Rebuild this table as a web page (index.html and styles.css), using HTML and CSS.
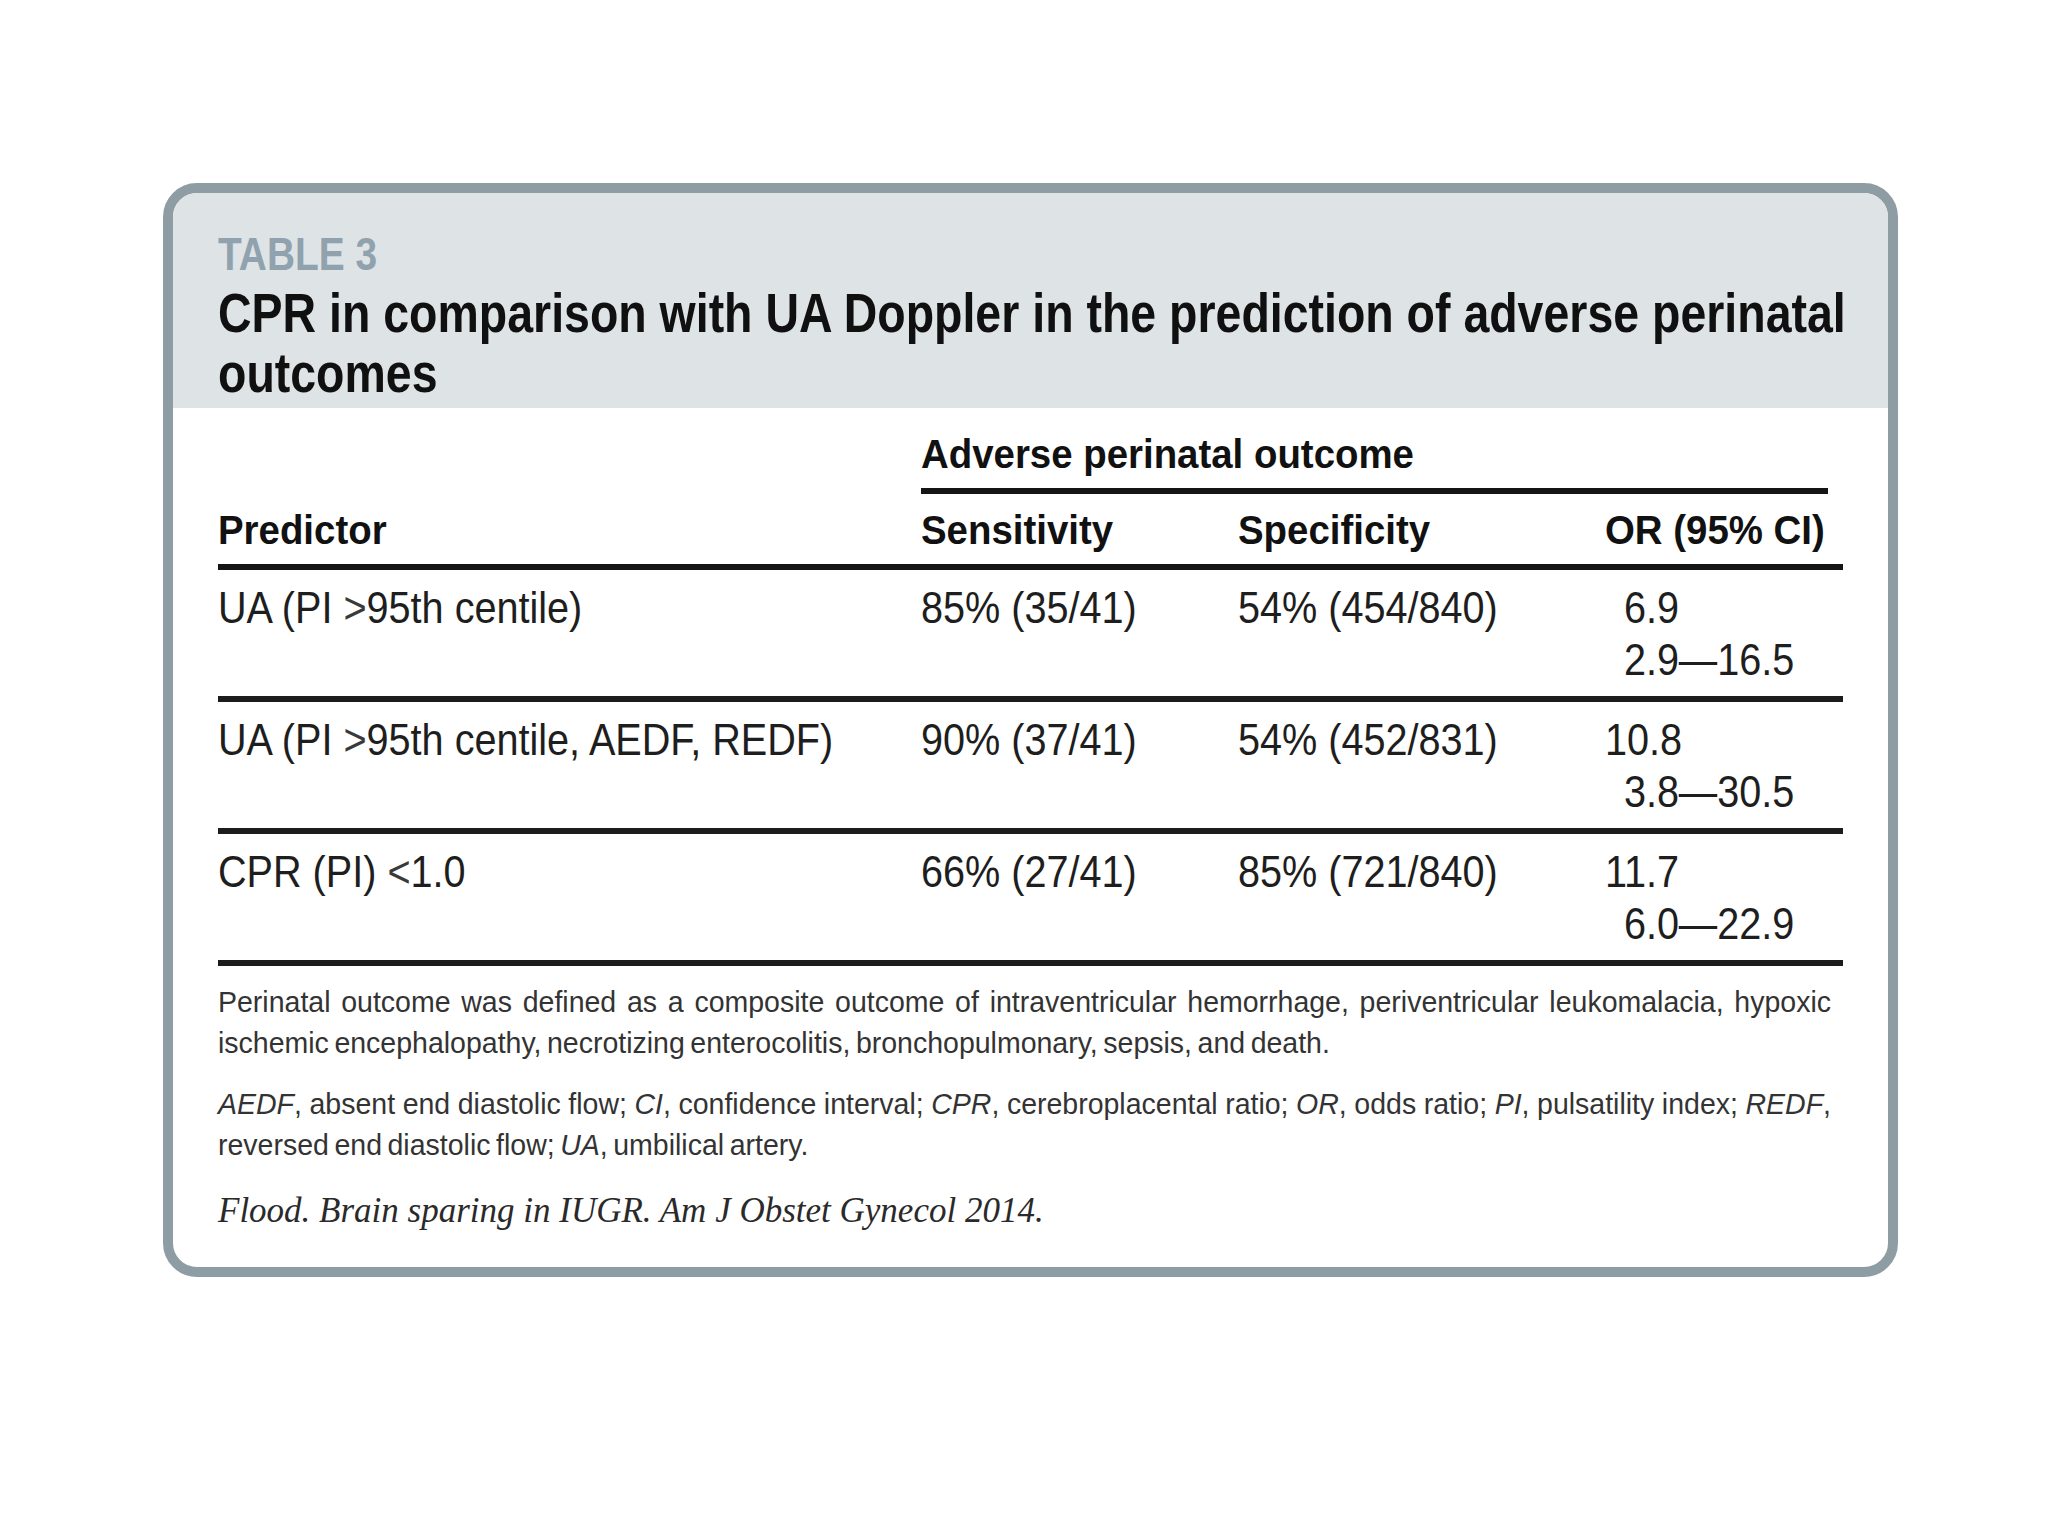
FILE: index.html
```html
<!DOCTYPE html>
<html lang="en">
<head>
<meta charset="utf-8">
<title>Table 3 – CPR vs UA Doppler</title>
<link rel="stylesheet" href="styles.css">
</head>
<body>
<div class="page">
  <section class="card">
    <header class="card-head">
      <div class="label">TABLE 3</div>
      <h1 class="title">CPR in comparison with UA Doppler in the prediction of adverse perinatal outcomes</h1>
    </header>
    <div class="card-body">
      <div class="row group-row">
        <div></div>
        <div class="group"><div class="cell">Adverse perinatal outcome</div></div>
      </div>
      <div class="row head-row">
        <div class="cell">Predictor</div>
        <div class="cell">Sensitivity</div>
        <div class="cell">Specificity</div>
        <div class="cell">OR (95% CI)</div>
      </div>
      <div class="row data-row">
        <div class="cell">UA (PI <span class="op">&gt;</span>95th centile)</div>
        <div class="cell">85% (35/41)</div>
        <div class="cell">54% (454/840)</div>
        <div><div class="cell pad">6.9</div><div class="cell pad">2.9<span class="dash">–</span>16.5</div></div>
      </div>
      <div class="row data-row">
        <div class="cell">UA (PI <span class="op">&gt;</span>95th centile, AEDF, REDF)</div>
        <div class="cell">90% (37/41)</div>
        <div class="cell">54% (452/831)</div>
        <div><div class="cell">10.8</div><div class="cell pad">3.8<span class="dash">–</span>30.5</div></div>
      </div>
      <div class="row data-row">
        <div class="cell">CPR (PI) <span class="op">&lt;</span>1.0</div>
        <div class="cell">66% (27/41)</div>
        <div class="cell">85% (721/840)</div>
        <div><div class="cell">11.7</div><div class="cell pad">6.0<span class="dash">–</span>22.9</div></div>
      </div>
      <p class="note first">Perinatal outcome was defined as a composite outcome of intraventricular hemorrhage, periventricular leukomalacia, hypoxic ischemic encephalopathy, necrotizing enterocolitis, bronchopulmonary, sepsis, and death.</p>
      <p class="note"><i>AEDF</i>, absent end diastolic flow; <i>CI</i>, confidence interval; <i>CPR</i>, cerebroplacental ratio; <i>OR</i>, odds ratio; <i>PI</i>, pulsatility index; <i>REDF</i>, reversed end diastolic flow; <i>UA</i>, umbilical artery.</p>
      <p class="cite">Flood. Brain sparing in IUGR. Am J Obstet Gynecol 2014.</p>
    </div>
  </section>
</div>
</body>
</html>
```

FILE: styles.css
```css
html, body {
  margin: 0;
  padding: 0;
  background: #ffffff;
}

.page {
  padding: 183px 0 0 163px;
}

.card {
  box-sizing: border-box;
  width: 1735px;
  border: 10px solid #8e9ca3;
  border-radius: 34px;
  overflow: hidden;
  background: #ffffff;
  font-family: "Liberation Sans", Arial, sans-serif;
  color: #1e1e1e;
}

/* the source typeface is a condensed grotesque: narrow the glyphs horizontally */
.label,
.title,
.cell,
.note {
  transform-origin: 0 0;
}

.card-head {
  background: #dee3e6;
  padding: 36px 20px 5px 45px;
}

.label {
  font-size: 46px;
  line-height: 50px;
  font-weight: 700;
  color: #8fa2ae;
  white-space: nowrap;
  transform: scaleX(0.845);
}

.title {
  margin: 4px 0 0;
  width: calc(100% / 0.845);
  font-size: 55px;
  line-height: 60px;
  font-weight: 700;
  color: #101010;
  transform: scaleX(0.845);
}

.card-body {
  padding: 21px 45px 36px 45px;
}

.row {
  display: grid;
  grid-template-columns: 703px 317px 367px 1fr;
}

.cell {
  white-space: nowrap;
}

.group-row,
.head-row {
  font-size: 40px;
  line-height: 50px;
  font-weight: 700;
  color: #111111;
}

.group-row .cell,
.head-row .cell {
  transform: scaleX(0.96);
}

.group {
  grid-column: 2 / 5;
  margin-right: 15px;
  padding-bottom: 9px;
  border-bottom: 6px solid #151515;
}

.head-row {
  margin-top: 11px;
  padding-bottom: 9px;
  border-bottom: 6px solid #151515;
}

.data-row {
  font-size: 44px;
  line-height: 52px;
  padding: 12px 0 10px;
  border-bottom: 6px solid #1c1c1c;
}

.data-row .cell {
  transform: scaleX(0.9);
}

.op {
  color: #3a3a3a;
}

.cell.pad {
  padding-left: 21px;
}

.dash {
  display: inline-block;
  margin: 0 9px;
  transform: scaleX(1.75);
}

.note {
  margin: 20px 0 0;
  width: calc((100% - 12px) / 0.95);
  font-size: 30px;
  line-height: 41px;
  word-spacing: -2.5px;
  color: #333333;
  text-align: justify;
  transform: scaleX(0.95);
}

.note.first {
  margin-top: 15px;
}

.note i {
  font-style: italic;
}

.cite {
  margin: 26px 0 0;
  font-family: "Liberation Serif", "Times New Roman", serif;
  font-style: italic;
  font-size: 35px;
  line-height: 40px;
  color: #2a2a2a;
}
```
